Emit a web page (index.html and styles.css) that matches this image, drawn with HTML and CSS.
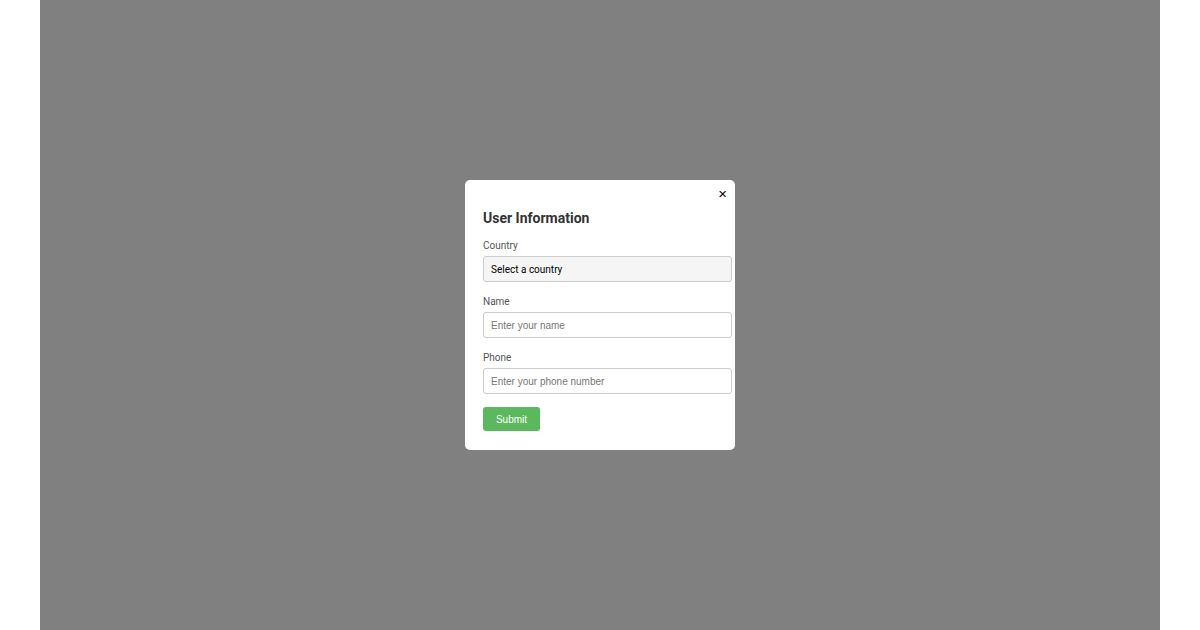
FILE: index.html
```html
<!DOCTYPE html>
<html lang="en">
<head>
    <meta charset="UTF-8">
    <meta name="viewport" content="width=device-width, initial-scale=1.0">
    <title>User Information</title>
    <link rel="stylesheet" href="styles.css">
</head>
<body>
    <div class="container">
        <div class="modal">
            <button class="close" type="button">&times;</button>
            <h2>User Information</h2>

            <div class="form-group">
                <label for="country">Country</label>
                <select id="country" class="field select">
                    <option>Select a country</option>
                </select>
            </div>

            <div class="form-group">
                <label for="name">Name</label>
                <input type="text" id="name" class="field" placeholder="Enter your name">
            </div>

            <div class="form-group">
                <label for="phone">Phone</label>
                <input type="text" id="phone" class="field" placeholder="Enter your phone number">
            </div>

            <button class="btn" type="button">Submit</button>
        </div>
    </div>
</body>
</html>
```

FILE: styles.css
```css
* {
    margin: 0;
    padding: 0;
}

body {
    background: #fff;
    font-family: Roboto, 'Liberation Sans', Arial, sans-serif;
}

.container {
    width: 1120px;
    height: 630px;
    margin: 0 auto;
    background: #808080;
    display: flex;
    justify-content: center;
    align-items: center;
}

.modal {
    position: relative;
    width: 234px;
    padding: 18px 18px 19px;
    background: #fff;
    border-radius: 5px;
}

.close {
    position: absolute;
    top: 6px;
    right: 8px;
    border: none;
    background: none;
    font-family: 'Liberation Sans', Arial, sans-serif;
    font-size: 15px;
    line-height: 15px;
    color: #000;
    cursor: pointer;
}

h2 {
    margin-top: 11px;
    margin-bottom: 12px;
    font-size: 14px;
    line-height: 18px;
    font-weight: 700;
    color: #333;
}

.form-group {
    margin-bottom: 13px;
}

label {
    display: block;
    padding-top: 1px;
    margin-bottom: 4px;
    font-size: 10px;
    line-height: 12px;
    color: #555;
}

.field {
    display: block;
    box-sizing: border-box;
    width: calc(100% + 15px);
    height: 26px;
    padding: 0 7px;
    border: 1px solid #ccc;
    border-radius: 3px;
    background: #fff;
    font-family: 'Liberation Sans', Arial, sans-serif;
    font-size: 10px;
    color: #333;
    outline: none;
}

.field::placeholder {
    color: #777;
}

.select {
    -webkit-appearance: none;
    appearance: none;
    background: #f5f5f5;
    font-family: Roboto, sans-serif;
    color: #000;
}

.btn {
    display: block;
    margin-top: 14px;
    width: 57px;
    height: 24px;
    border: none;
    border-radius: 3px;
    background: #5cb85c;
    color: #fff;
    font-family: 'Liberation Sans', Arial, sans-serif;
    font-size: 10px;
    cursor: pointer;
}

.form-group + .btn {
    margin-top: 1px;
}
```
